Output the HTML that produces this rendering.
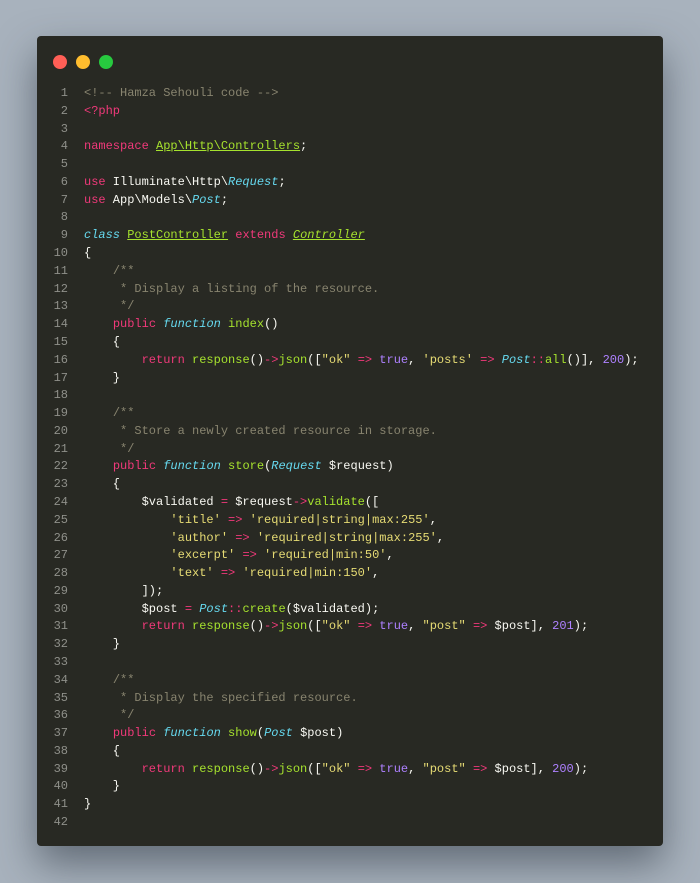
<!DOCTYPE html>
<html><head><meta charset="utf-8"><style>
html,body{margin:0;padding:0;}
body{width:700px;height:883px;background:#a8b2bd;position:relative;overflow:hidden;font-family:"Liberation Mono",monospace;}
.win{position:absolute;left:37px;top:36px;width:626px;height:810px;background:#282923;border-radius:4px;box-shadow:0 18px 40px rgba(40,50,60,0.55);}
.dot{position:absolute;top:19px;width:14px;height:14px;border-radius:50%;}
.code{position:absolute;left:0;top:49px;font-size:12px;line-height:17.78px;color:#f8f8f2;white-space:pre;}
.ln{display:inline-block;width:31px;text-align:right;color:#8f908a;margin-right:16px;}
.k{color:#f0397a}.g{color:#a6e22e}.b{color:#66d9ef;font-style:italic}.p{color:#ae81ff}.y{color:#e6db74}.c{color:#88846f}.u{text-decoration:underline}
</style></head><body>
<div class="win">
<div class="dot" style="left:16px;background:#ff5f56"></div>
<div class="dot" style="left:39px;background:#ffbd2e"></div>
<div class="dot" style="left:62px;background:#27c93f"></div>
<div class="code"><span class="ln">1</span><span class="c">&lt;!-- Hamza Sehouli code --&gt;</span>
<span class="ln">2</span><span class="k">&lt;?php</span>
<span class="ln">3</span>
<span class="ln">4</span><span class="k">namespace</span> <span class="g u">App\Http\Controllers</span>;
<span class="ln">5</span>
<span class="ln">6</span><span class="k">use</span> Illuminate\Http\<span class="b">Request</span>;
<span class="ln">7</span><span class="k">use</span> App\Models\<span class="b">Post</span>;
<span class="ln">8</span>
<span class="ln">9</span><span class="b">class</span> <span class="g u">PostController</span> <span class="k">extends</span> <span class="g u" style="font-style:italic">Controller</span>
<span class="ln">10</span>{
<span class="ln">11</span>    <span class="c">/**</span>
<span class="ln">12</span><span class="c">     * Display a listing of the resource.</span>
<span class="ln">13</span><span class="c">     */</span>
<span class="ln">14</span>    <span class="k">public</span> <span class="b">function</span> <span class="g">index</span>()
<span class="ln">15</span>    {
<span class="ln">16</span>        <span class="k">return</span> <span class="g">response</span>()<span class="k">-&gt;</span><span class="g">json</span>([<span class="y">"ok"</span> <span class="k">=&gt;</span> <span class="p">true</span>, <span class="y">'posts'</span> <span class="k">=&gt;</span> <span class="b">Post</span><span class="k">::</span><span class="g">all</span>()], <span class="p">200</span>);
<span class="ln">17</span>    }
<span class="ln">18</span>
<span class="ln">19</span>    <span class="c">/**</span>
<span class="ln">20</span><span class="c">     * Store a newly created resource in storage.</span>
<span class="ln">21</span><span class="c">     */</span>
<span class="ln">22</span>    <span class="k">public</span> <span class="b">function</span> <span class="g">store</span>(<span class="b">Request</span> $request)
<span class="ln">23</span>    {
<span class="ln">24</span>        $validated <span class="k">=</span> $request<span class="k">-&gt;</span><span class="g">validate</span>([
<span class="ln">25</span>            <span class="y">'title'</span> <span class="k">=&gt;</span> <span class="y">'required|string|max:255'</span>,
<span class="ln">26</span>            <span class="y">'author'</span> <span class="k">=&gt;</span> <span class="y">'required|string|max:255'</span>,
<span class="ln">27</span>            <span class="y">'excerpt'</span> <span class="k">=&gt;</span> <span class="y">'required|min:50'</span>,
<span class="ln">28</span>            <span class="y">'text'</span> <span class="k">=&gt;</span> <span class="y">'required|min:150'</span>,
<span class="ln">29</span>        ]);
<span class="ln">30</span>        $post <span class="k">=</span> <span class="b">Post</span><span class="k">::</span><span class="g">create</span>($validated);
<span class="ln">31</span>        <span class="k">return</span> <span class="g">response</span>()<span class="k">-&gt;</span><span class="g">json</span>([<span class="y">"ok"</span> <span class="k">=&gt;</span> <span class="p">true</span>, <span class="y">"post"</span> <span class="k">=&gt;</span> $post], <span class="p">201</span>);
<span class="ln">32</span>    }
<span class="ln">33</span>
<span class="ln">34</span>    <span class="c">/**</span>
<span class="ln">35</span><span class="c">     * Display the specified resource.</span>
<span class="ln">36</span><span class="c">     */</span>
<span class="ln">37</span>    <span class="k">public</span> <span class="b">function</span> <span class="g">show</span>(<span class="b">Post</span> $post)
<span class="ln">38</span>    {
<span class="ln">39</span>        <span class="k">return</span> <span class="g">response</span>()<span class="k">-&gt;</span><span class="g">json</span>([<span class="y">"ok"</span> <span class="k">=&gt;</span> <span class="p">true</span>, <span class="y">"post"</span> <span class="k">=&gt;</span> $post], <span class="p">200</span>);
<span class="ln">40</span>    }
<span class="ln">41</span>}
<span class="ln">42</span></div>
</div>
</body></html>
